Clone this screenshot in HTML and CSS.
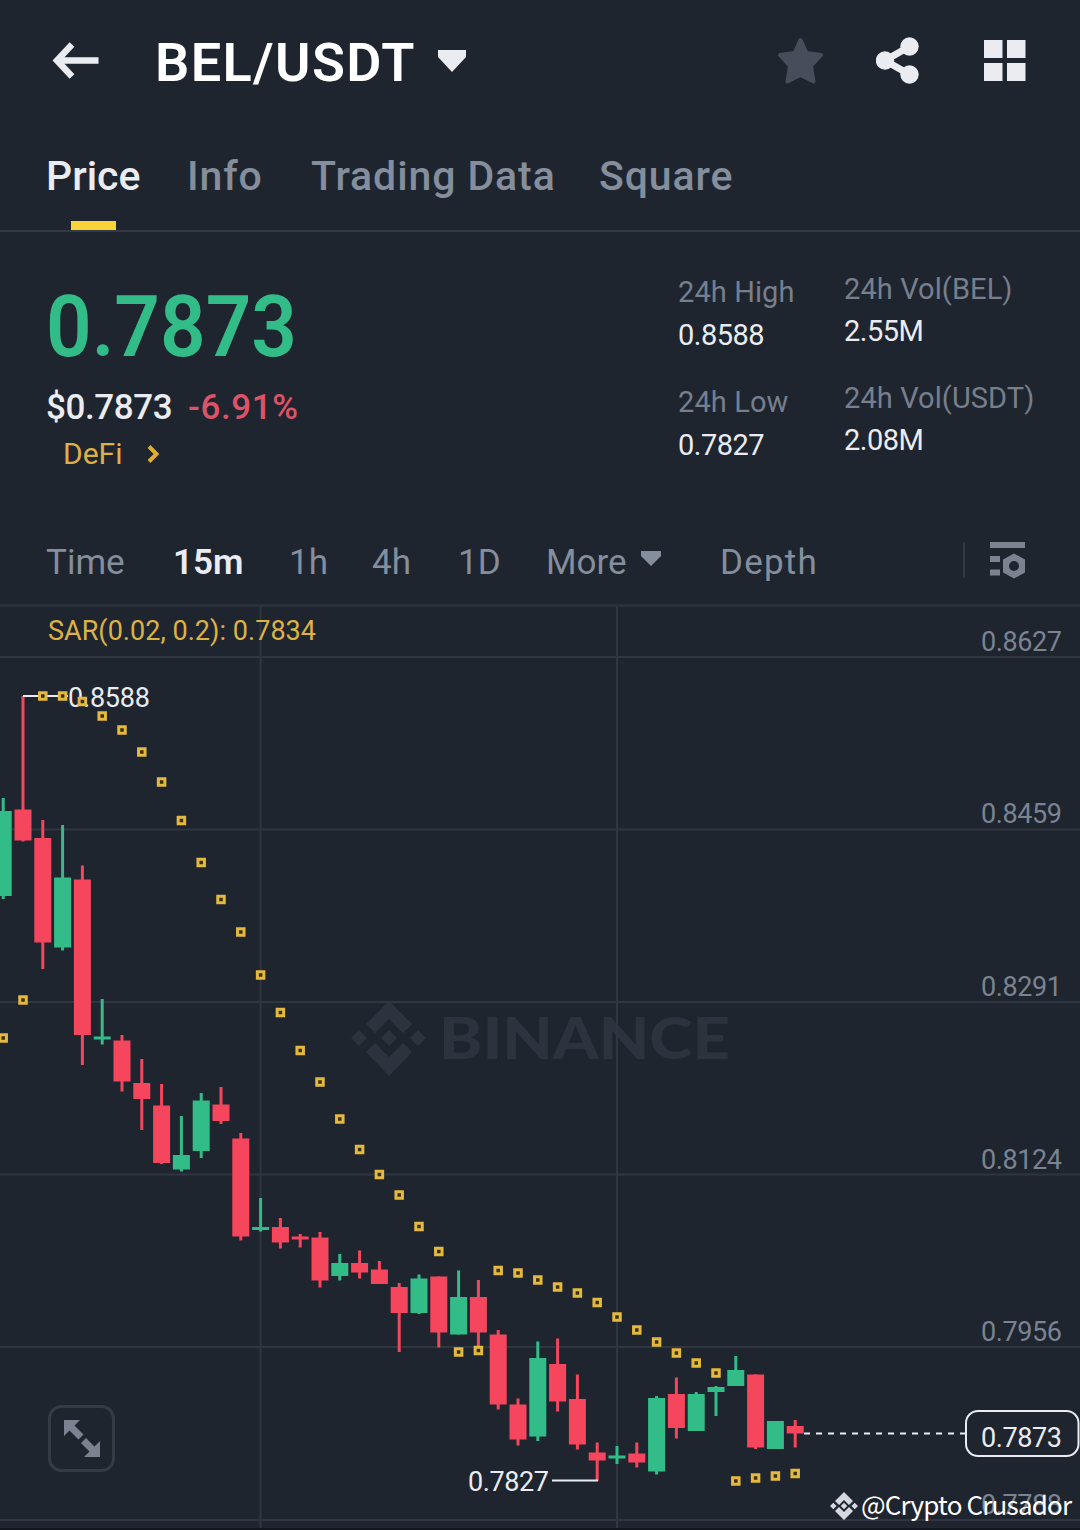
FILE: index.html
```
<!DOCTYPE html>
<html lang="en">
<head>
    <meta charset="UTF-8">
    <meta name="viewport" content="width=device-width, initial-scale=1.0">
    <title>BEL/USDT</title>
    <link rel="stylesheet" href="styles.css">
</head>
<body>

    <!-- Top bar -->
    <header class="header">
        <svg class="back" width="48" height="40" viewBox="0 0 48 40">
            <path d="M46.500 19.500H6M20 3.500L5 19.500l15 16" fill="none" stroke="#eaecf2" stroke-width="6.5"/>
        </svg>
        <h1>BEL/USDT</h1>
        <svg class="caret" width="28" height="22" viewBox="0 0 28 22">
            <path d="M0 0h28v7L14 22 0 7z" fill="#eaecf2"/>
        </svg>
        <div class="actions">
            <svg width="48" height="50" viewBox="0 0 48 50">
                <path d="M23.500 4l6 13 14.500 2-10 11 2.500 15.500-13-6.500-13 6.500L13 30 3 19l14.500-2z" fill="#474d5b" stroke="#474d5b" stroke-width="4" stroke-linejoin="round"/>
            </svg>
            <svg width="44" height="48" viewBox="0 0 44 48">
                <path d="M33.500 9.500L9 23.500l24.500 14" fill="none" stroke="#eaecf2" stroke-width="7"/>
                <circle cx="33.500" cy="9.500" r="9.200" fill="#eaecf2"/>
                <circle cx="9" cy="23.500" r="9.200" fill="#eaecf2"/>
                <circle cx="33.500" cy="37.500" r="9.200" fill="#eaecf2"/>
            </svg>
            <svg width="42" height="42" viewBox="0 0 42 42">
                <path d="M0 0h18.500v18H0zM23 0h18.500v18H23zM0 23h18.500v18H0zM23 23h18.500v18H23z" fill="#eaecf2"/>
            </svg>
        </div>
    </header>

    <nav class="tabs">
        <a class="tab active">Price</a>
        <a class="tab">Info</a>
        <a class="tab">Trading Data</a>
        <a class="tab">Square</a>
    </nav>

    <!-- Price and 24h stats -->
    <section class="summary">
        <div class="price-box">
            <div class="price">0.7873</div>
            <div class="sub">
                <span class="usd">$0.7873</span>
                <span class="change">-6.91%</span>
            </div>
            <div class="tag">
                <span>DeFi</span>
                <svg width="14" height="20" viewBox="0 0 14 20">
                    <path d="M3 2.500L10.500 10 3 17.500" fill="none" stroke="#dfae2b" stroke-width="4"/>
                </svg>
            </div>
        </div>
        <dl class="stats">
            <dt>24h High</dt>
            <dd>0.8588</dd>
            <dt>24h Low</dt>
            <dd>0.7827</dd>
        </dl>
        <dl class="stats volume">
            <dt>24h Vol(BEL)</dt>
            <dd>2.55M</dd>
            <dt>24h Vol(USDT)</dt>
            <dd>2.08M</dd>
        </dl>
    </section>

    <!-- Chart intervals -->
    <div class="intervals">
        <span>Time</span>
        <span class="active">15m</span>
        <span>1h</span>
        <span>4h</span>
        <span>1D</span>
        <span>More</span>
        <svg class="more-caret" width="20" height="15" viewBox="0 0 20 15">
            <path d="M0 0h20v5L10 15 0 5z" fill="#848e9c"/>
        </svg>
        <span class="depth">Depth</span>
        <i class="divider"></i>
        <svg class="settings" width="36" height="38" viewBox="0 0 36 38">
            <path d="M0 1h35v6H0zM0 15h10v6H0zM0 28.500h10v6H0z" fill="#7b8391"/>
            <path fill-rule="evenodd" d="M24 12.500l11 6v13l-11 6-11-6v-13zM24 20a5 5 0 1 0 0 10 5 5 0 1 0 0-10z" fill="#7b8391"/>
        </svg>
    </div>

    <svg class="chart" width="1080" height="926" viewBox="0 604 1080 926">
        <!-- Logo behind the candles -->
        <g class="logo">
            <path d="M389 1001l23 23-9 9-14-14-14 14-9-9zM366 1052l9-9 14 14 14-14 9 9-23 24zM351 1038l8-8 8 8-8 8zM381 1038l8-8 8 8-8 8zM410 1038l8-8 8 8-8 8z"/>
            <text x="439" y="1059" textLength="291" lengthAdjust="spacingAndGlyphs">BINANCE</text>
        </g>
        <path class="top-line" d="M0 605.500H1080"/>
        <path class="grid" d="M0 657H1080M0 829.500H1080M0 1002H1080M0 1174.500H1080M0 1347H1080M0 1520H1080M260.500 606V1530M617 606V1530"/>

        <g class="axis">
            <text x="981" y="651" textLength="81">0.8627</text>
            <text x="981" y="823" textLength="81">0.8459</text>
            <text x="981" y="996" textLength="81">0.8291</text>
            <text x="981" y="1169" textLength="81">0.8124</text>
            <text x="981" y="1341" textLength="81">0.7956</text>
            <text x="981" y="1514" textLength="81">0.7788</text>
        </g>

        <text class="sar-label" x="48" y="640" textLength="268">SAR(0.02, 0.2): 0.7834</text>
        <g id="candles"></g>
        <path class="marker" d="M23 696H68M552 1480.500H598"/>
        <text class="marker-text" x="68" y="707" textLength="82">0.8588</text>
        <text class="marker-text" x="468" y="1491" textLength="81">0.7827</text>
        <g id="sar"></g>

        <!-- Last price -->
        <path class="last-line" d="M804 1433.500H966"/>
        <rect class="last-box" x="966" y="1411" width="112.500" height="45" rx="12"/>
        <text class="marker-text" x="981" y="1447" textLength="81">0.7873</text>

        <rect class="expand-box" x="49.500" y="1406.500" width="64" height="64" rx="12"/>
        <path class="expand" d="M64 1420h16l-5.500 5.500 9 9-5 5-9-9L64 1436zM100 1457H84l5.500-5.500-8.500-8.500 5-5 8.500 8.500L100 1441z"/>

        <g class="credit">
            <path d="M844 1492l9 9-4 4-5-5-5 5-4-4zM835 1511l4-4 5 5 5-5 4 4-9 9zM830 1506l3.300-3.300 3.300 3.300-3.300 3.300zM840.700 1506l3.300-3.300 3.300 3.300-3.300 3.300zM851.400 1506l3.300-3.300 3.300 3.300-3.300 3.300z"/>
            <text x="861" y="1515" textLength="211">@Crypto Crusador</text>
        </g>
        <path class="bottom-line" d="M0 1529H1080"/>
    </svg>

    <script>
        // [direction, high, body top, body bottom, low, sar]
        const candles = [
            ['up', 798, 811, 896, 899, 1038],
            ['down', 696, 809.5, 840.5, 841.5, 1000],
            ['down', 820, 838, 942.5, 969, 696],
            ['up', 825, 877.5, 947.5, 950.5, 696],
            ['down', 865.5, 879.5, 1035, 1065, 701.5],
            ['up', 999, 1036.5, 1039.5, 1044.5, 716],
            ['down', 1035, 1040.5, 1081.5, 1091.5, 730],
            ['down', 1059, 1083, 1099, 1130, 752],
            ['down', 1084, 1105.5, 1163, 1164, 782],
            ['up', 1116, 1155, 1169.5, 1171.5, 820.5],
            ['up', 1093, 1100.5, 1151, 1158, 862.5],
            ['down', 1087, 1104.5, 1121, 1124, 899.5],
            ['down', 1133, 1138.5, 1236.5, 1240.5, 932],
            ['up', 1198, 1227, 1230, 1231.5, 975],
            ['down', 1218, 1227, 1242.5, 1248.5, 1012.5],
            ['down', 1234, 1236.5, 1239.5, 1247.5, 1050.5],
            ['down', 1232, 1237.5, 1280.5, 1287.5, 1082],
            ['up', 1254, 1263, 1276, 1280.5, 1119],
            ['down', 1250.5, 1263, 1272.5, 1278.5, 1149.5],
            ['down', 1261, 1269.5, 1284, 1284, 1174.5],
            ['down', 1283, 1287, 1313, 1352, 1195],
            ['up', 1274.5, 1278.5, 1313, 1314, 1226.5],
            ['down', 1276.5, 1276.5, 1332.5, 1347.5, 1251.5],
            ['up', 1270.5, 1297, 1334.5, 1334.5, 1352],
            ['down', 1280, 1297, 1332.5, 1346, 1350.5],
            ['down', 1330, 1334.5, 1404.5, 1409.5, 1270.5],
            ['down', 1398.5, 1404.5, 1439.5, 1445.5, 1273],
            ['up', 1341.5, 1358, 1436.5, 1441, 1280],
            ['down', 1338.5, 1364, 1401.5, 1411.5, 1287],
            ['down', 1374.5, 1399, 1444.5, 1449.5, 1293],
            ['down', 1442.5, 1452.5, 1460.5, 1481, 1302.5],
            ['up', 1446, 1455.5, 1458.5, 1464, 1317],
            ['down', 1442.5, 1453.5, 1462.5, 1467.5, 1330],
            ['up', 1396, 1398, 1471.5, 1474.5, 1342],
            ['down', 1377.5, 1394, 1428, 1438.5, 1353],
            ['up', 1392, 1394, 1431, 1431, 1363],
            ['up', 1386, 1387, 1392, 1416, 1373],
            ['up', 1356, 1370, 1386, 1386, 1481],
            ['down', 1374.5, 1374.5, 1447.5, 1449, 1478],
            ['up', 1421, 1421, 1449, 1449, 1476],
            ['down', 1420, 1426, 1433.5, 1447.5, 1473.5]
        ];

        let bars = '';
        let dots = '';
        candles.forEach(([dir, high, top, bottom, low, sar], i) => {
            const x = 3.2 + i * 19.8;
            bars += `<rect class="${dir}" x="${x - 1.5}" y="${high}" width="3" height="${low - high}"/>`;
            bars += `<rect class="${dir}" x="${x - 8.5}" y="${top}" width="17" height="${bottom - top}"/>`;
            dots += `<rect x="${x - 3.25}" y="${sar - 3.25}" width="6.5" height="6.5"/>`;
        });
        document.getElementById('candles').innerHTML = bars;
        document.getElementById('sar').innerHTML = dots;
    </script>

</body>
</html>
```
FILE: styles.css
```
body {
    font-family: Roboto, sans-serif;
    background-color: #1f252f;
    color: #eaecf2;
    margin: 0;
    padding: 0;
    width: 1080px;
    height: 1530px;
    overflow: hidden;
}

svg {
    display: block;
}

.header {
    display: flex;
    align-items: center;
    height: 122px;
    padding: 0 54px 0 52px;
}

.header h1 {
    width: 258px;
    margin: 2px 0 0 55px;
    font-size: 54px;
    font-weight: 600;
    letter-spacing: 1.4px;
    color: #fff;
    white-space: nowrap;
}

.caret {
    margin-left: 25px;
}

.actions {
    display: flex;
    align-items: center;
    margin-left: auto;
}

.actions svg + svg {
    margin-left: 51px;
}

.actions svg + svg + svg {
    margin-left: 64px;
}

/* Tabs */
.tabs {
    display: grid;
    grid-template-columns: 141px 124px 288px 140px;
    box-sizing: border-box;
    height: 110px;
    padding-left: 46px;
    border-bottom: 2px solid #333944;
}

.tab {
    padding-top: 29px;
    font-size: 41px;
    line-height: 50px;
    font-weight: 500;
    letter-spacing: 0.9px;
    color: #848e9c;
    white-space: nowrap;
}

.tab.active {
    letter-spacing: 0;
    color: #eaecf2;
}

.tab.active::after {
    content: "";
    display: block;
    width: 45px;
    height: 9px;
    margin: 20px 0 0 25px;
    background-color: #f8d33a;
}

/* Summary */
.summary {
    display: flex;
    height: 292px;
    padding-left: 46px;
    white-space: nowrap;
}

.price-box {
    width: 632px;
    padding-top: 44px;
}

.price {
    font-size: 85px;
    line-height: 102px;
    font-weight: 600;
    color: #32bd88;
    transform: scaleX(0.94);
    transform-origin: left;
}

.sub {
    display: flex;
    margin-top: 8px;
    font-size: 35px;
    line-height: 44px;
    font-weight: 500;
}

.usd {
    width: 142px;
    letter-spacing: -0.4px;
}

.change {
    letter-spacing: 0.6px;
    color: #dc5368;
}

.tag {
    display: flex;
    align-items: center;
    gap: 24px;
    padding: 6px 0 0 17px;
    font-size: 30px;
    line-height: 36px;
    color: #dcb245;
}

.stats {
    width: 166px;
    margin: 0;
    padding-top: 41px;
    font-size: 29px;
}

.stats.volume {
    padding-top: 38px;
}

.stats dt {
    line-height: 38px;
    letter-spacing: 0.1px;
    color: #767f8d;
}

.stats dd {
    margin: 5px 0 29px;
    line-height: 38px;
    letter-spacing: -0.5px;
}

.stats.volume dd {
    margin: 4px 0 29px;
}

/* Intervals */
.intervals {
    display: grid;
    grid-template-columns: 128px 115px 83px 86px 88px 95px 79px 243px 26px 36px;
    align-items: center;
    box-sizing: border-box;
    height: 80px;
    padding: 0 0 3px 46px;
    font-size: 35px;
    line-height: 44px;
    color: #848e9c;
}

.intervals .active {
    margin-left: -1px;
    font-weight: 600;
    color: #eaecf2;
}

.intervals .depth {
    letter-spacing: 1.2px;
}

.more-caret {
    margin-top: -8px;
}

.divider {
    width: 2px;
    height: 36px;
    margin-top: -6px;
    background-color: #333944;
}

.settings {
    margin-top: -5px;
    margin-left: 1px;
}

/* Chart */
.grid {
    fill: none;
    stroke: #303641;
    stroke-width: 2;
}

.top-line {
    stroke: #2a303b;
    stroke-width: 3;
}

.bottom-line {
    stroke: #14161f;
    stroke-width: 2;
}

.logo {
    fill: #2c333e;
    font-family: Lato, sans-serif;
    font-size: 58px;
    font-weight: 900;
}

.axis {
    fill: #7b8391;
    font-size: 27px;
}

.sar-label {
    fill: #dcb245;
    font-size: 27px;
}

.marker-text {
    fill: #eaecf2;
    font-size: 27px;
}

.marker {
    fill: none;
    stroke: #eaecf2;
    stroke-width: 2;
}

.up {
    fill: #32bd88;
}

.down {
    fill: #f6465d;
}

#sar {
    fill: #3c2f0c;
    stroke: #e3b93f;
    stroke-width: 3;
}

.last-line {
    stroke: #eaecf2;
    stroke-width: 2;
    stroke-dasharray: 6 6;
}

.last-box {
    fill: #1f252f;
    stroke: #eaecf2;
    stroke-width: 2;
}

.expand-box {
    fill: #1f252f;
    stroke: #343a46;
    stroke-width: 3;
}

.expand {
    fill: #7b8391;
}

.credit path {
    fill: #d5d8de;
}

.credit text {
    fill: #fff;
    font-family: "Noto Sans CJK SC", sans-serif;
    font-size: 26px;
}
```
